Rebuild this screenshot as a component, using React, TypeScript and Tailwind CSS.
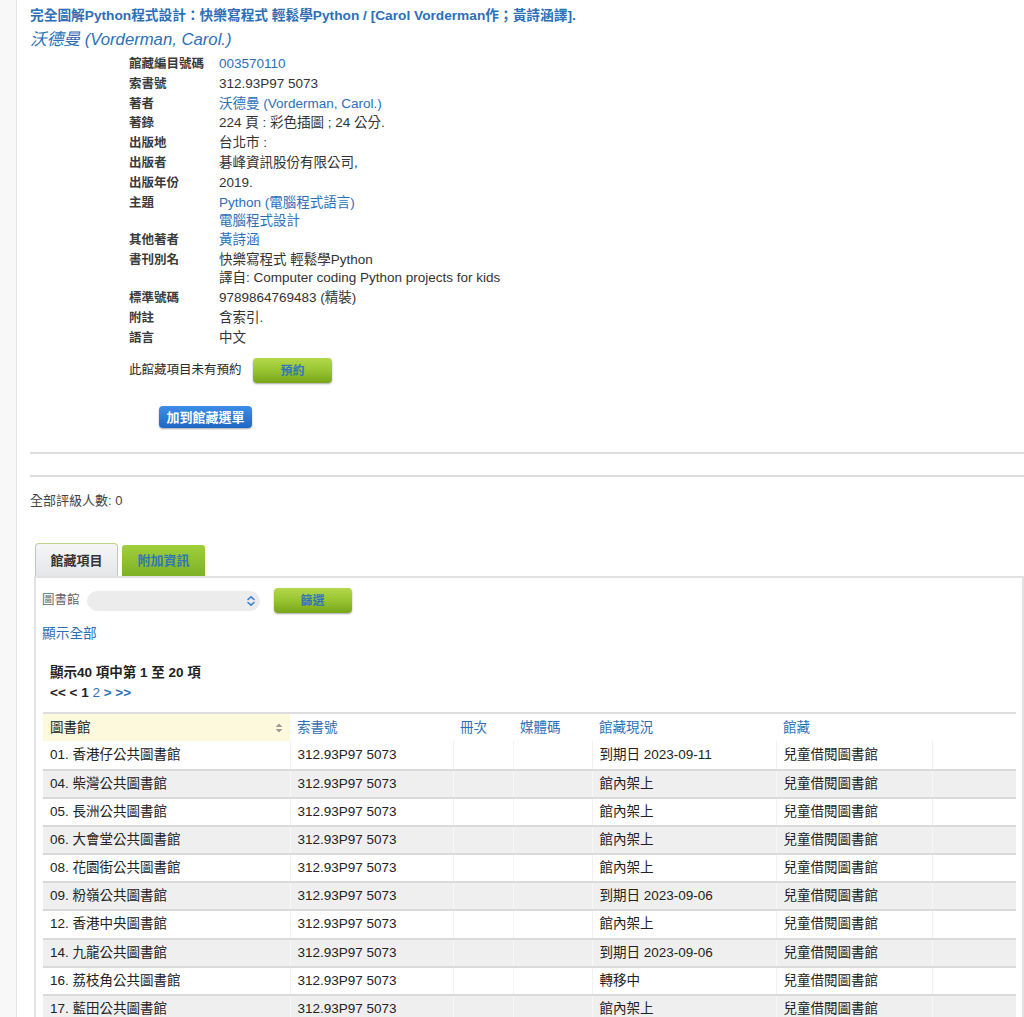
import React from "react";

const font = { fontFamily: '"Liberation Sans", Arial, "Noto Sans CJK TC", sans-serif' };

type Field = { label: string; values: { text: string; link?: boolean }[] };

const fields: Field[] = [
  { label: "館藏編目號碼", values: [{ text: "003570110", link: true }] },
  { label: "索書號", values: [{ text: "312.93P97 5073" }] },
  { label: "著者", values: [{ text: "沃德曼 (Vorderman, Carol.)", link: true }] },
  { label: "著錄", values: [{ text: "224 頁 : 彩色插圖 ; 24 公分." }] },
  { label: "出版地", values: [{ text: "台北市 :" }] },
  { label: "出版者", values: [{ text: "碁峰資訊股份有限公司," }] },
  { label: "出版年份", values: [{ text: "2019." }] },
  {
    label: "主題",
    values: [
      { text: "Python (電腦程式語言)", link: true },
      { text: "電腦程式設計", link: true },
    ],
  },
  { label: "其他著者", values: [{ text: "黃詩涵", link: true }] },
  {
    label: "書刊別名",
    values: [{ text: "快樂寫程式 輕鬆學Python" }, { text: "譯自: Computer coding Python projects for kids" }],
  },
  { label: "標準號碼", values: [{ text: "9789864769483 (精裝)" }] },
  { label: "附註", values: [{ text: "含索引." }] },
  { label: "語言", values: [{ text: "中文" }] },
];

const rows: [string, string][] = [
  ["01. 香港仔公共圖書館", "到期日 2023-09-11"],
  ["04. 柴灣公共圖書館", "館內架上"],
  ["05. 長洲公共圖書館", "館內架上"],
  ["06. 大會堂公共圖書館", "館內架上"],
  ["08. 花園街公共圖書館", "館內架上"],
  ["09. 粉嶺公共圖書館", "到期日 2023-09-06"],
  ["12. 香港中央圖書館", "館內架上"],
  ["14. 九龍公共圖書館", "到期日 2023-09-06"],
  ["16. 荔枝角公共圖書館", "轉移中"],
  ["17. 藍田公共圖書館", "館內架上"],
];

function GreenButton({ children, className }: { children: React.ReactNode; className: string }) {
  return (
    <div
      className={`flex items-center justify-center rounded-[4px] bg-gradient-to-b from-[#b3d84a] via-[#98c431] to-[#78a619] text-[12px] font-bold text-[#2f78b4] shadow-[0_1px_2px_rgba(0,0,0,0.35)] ${className}`}
    >
      {children}
    </div>
  );
}

export default function App() {
  return (
    <div className="flex min-h-[1017px] bg-white text-[#333]" style={font}>
      <div className="w-[17px] shrink-0 border-r border-[#e6e6e6] bg-[#f8f8f8]" />
      <div className="flex-1 pl-[13px] pr-[2px] pt-[7px]">
        <div className="text-[13.7px] font-bold leading-[18px] text-[#2d6fb7]">
          完全圖解Python程式設計：快樂寫程式 輕鬆學Python / [Carol Vorderman作；黃詩涵譯].
        </div>
        <div className="mt-[5px] text-[16.7px] italic leading-[20px] text-[#2d6fb7]">沃德曼 (Vorderman, Carol.)</div>

        <div className="ml-[99px] mt-[5px]">
          {fields.map((f) => (
            <div key={f.label} className="flex pb-[1.8px] text-[13.5px] leading-[18px]">
              <div className="w-[90px] shrink-0 text-[12.5px] font-bold text-[#3a3a3a]">{f.label}</div>
              <div>
                {f.values.map((v) => (
                  <div key={v.text} className={v.link ? "text-[#2d6fb7]" : "text-[#333]"}>
                    {v.text}
                  </div>
                ))}
              </div>
            </div>
          ))}
          <div className="mt-[10px] flex items-center">
            <div className="w-[124px] text-[12.5px] text-[#2a2a2a]">此館藏項目未有預約</div>
            <GreenButton className="h-[25px] w-[79px]">預約</GreenButton>
          </div>
          <div className="ml-[30px] mt-[23px] flex h-[22px] w-[93px] items-center justify-center rounded-[4px] bg-gradient-to-b from-[#3d8ee6] to-[#1f67c4] text-[13px] font-bold text-white shadow-[0_1px_2px_rgba(0,0,0,0.35)]">
            加到館藏選單
          </div>
        </div>

        <div className="mt-[24px] h-[2px] bg-[#dddddd]" />
        <div className="mt-[21px] h-[2px] bg-[#dddddd]" />

        <div className="mt-[16px] text-[13px] leading-[16px] text-[#444]">全部評級人數: 0</div>

        <div className="ml-[4px] mt-[34px]">
          <div className="flex items-end gap-[4px] pl-[1px]">
            <div className="flex h-[33px] w-[83px] items-center justify-center rounded-t-[4px] border border-b-0 border-[#bcd58a] bg-gradient-to-b from-[#f6f6f6] to-[#e4e6e8] text-[13px] font-bold text-[#333]">
              館藏項目
            </div>
            <div className="flex h-[31px] w-[83px] items-center justify-center rounded-t-[3px] bg-gradient-to-b from-[#9fcf3a] to-[#7fb126] text-[13px] font-bold text-[#2f78b4]">
              附加資訊
            </div>
          </div>
          <div className="border-2 border-b-0 border-[#e2e2e2] px-[6px] pt-[10px]">
            <div className="flex items-center">
              <span className="text-[12.5px] text-[#666]">圖書館</span>
              <div className="ml-[7px] flex h-[20px] w-[173px] items-center justify-end rounded-full bg-[#ececec] pr-[4px]">
                <svg width="10" height="12" viewBox="0 0 10 12" fill="none" stroke="#3b7fd0" strokeWidth="1.6" strokeLinecap="round" strokeLinejoin="round">
                  <path d="M2 4.5 L5 1.8 L8 4.5" />
                  <path d="M2 7.5 L5 10.2 L8 7.5" />
                </svg>
              </div>
              <GreenButton className="ml-[14px] h-[25px] w-[78px]">篩選</GreenButton>
            </div>
            <div className="mt-[12px] text-[13.7px] leading-[18px] text-[#2d6fb7]">顯示全部</div>

            <div className="ml-[8px] mt-[21px] text-[13.5px] font-bold leading-[18px] text-[#222]">顯示40 項中第 1 至 20 項</div>
            <div className="ml-[8px] mt-[2px] text-[13.5px] font-bold leading-[18px] text-[#222]">
              {"<< < 1 "}
              <span className="font-normal text-[#2d6fb7]">2</span>
              <span className="text-[#2d6fb7]">{" > >>"}</span>
            </div>

            <table className="mt-[10px] ml-[1px] w-[973px] table-fixed border-collapse text-[13.5px] text-[#222]">
              <colgroup>
                <col className="w-[247px]" />
                <col className="w-[163px]" />
                <col className="w-[60px]" />
                <col className="w-[79px]" />
                <col className="w-[184px]" />
                <col className="w-[156px]" />
                <col className="w-[84px]" />
              </colgroup>
              <thead>
                <tr className="h-[28px] border-t-2 border-[#dddddd] text-left font-normal text-[#2d6fb7]">
                  <th className="bg-[#fcf9dc] px-[7px] font-normal text-[#222]">
                    <div className="flex items-center justify-between">
                      <span>圖書館</span>
                      <svg width="8" height="10" viewBox="0 0 8 10" fill="#9a9a9a">
                        <path d="M4 0.5 L7.5 4 H0.5 Z" />
                        <path d="M4 9.5 L7.5 6 H0.5 Z" />
                      </svg>
                    </div>
                  </th>
                  <th className="px-[7px] font-normal">索書號</th>
                  <th className="px-[7px] font-normal">冊次</th>
                  <th className="px-[7px] font-normal">媒體碼</th>
                  <th className="px-[7px] font-normal">館藏現況</th>
                  <th className="px-[7px] font-normal">館藏</th>
                  <th />
                </tr>
              </thead>
              <tbody>
                {rows.map(([lib, status], i) => {
                  const gray = i % 2 === 1;
                  const cell = `px-[7px] border-r ${gray ? "border-[#f7f7f7]" : "border-[#f1f1f1]"}`;
                  return (
                    <tr key={lib} className={`h-[28.2px] border-b-2 border-[#dadada] ${gray ? "bg-[#efefef]" : "bg-white"}`}>
                      <td className={cell}>{lib}</td>
                      <td className={cell}>312.93P97 5073</td>
                      <td className={cell}></td>
                      <td className={cell}></td>
                      <td className={cell}>{status}</td>
                      <td className={cell}>兒童借閱圖書館</td>
                      <td></td>
                    </tr>
                  );
                })}
              </tbody>
            </table>
          </div>
        </div>
      </div>
    </div>
  );
}
